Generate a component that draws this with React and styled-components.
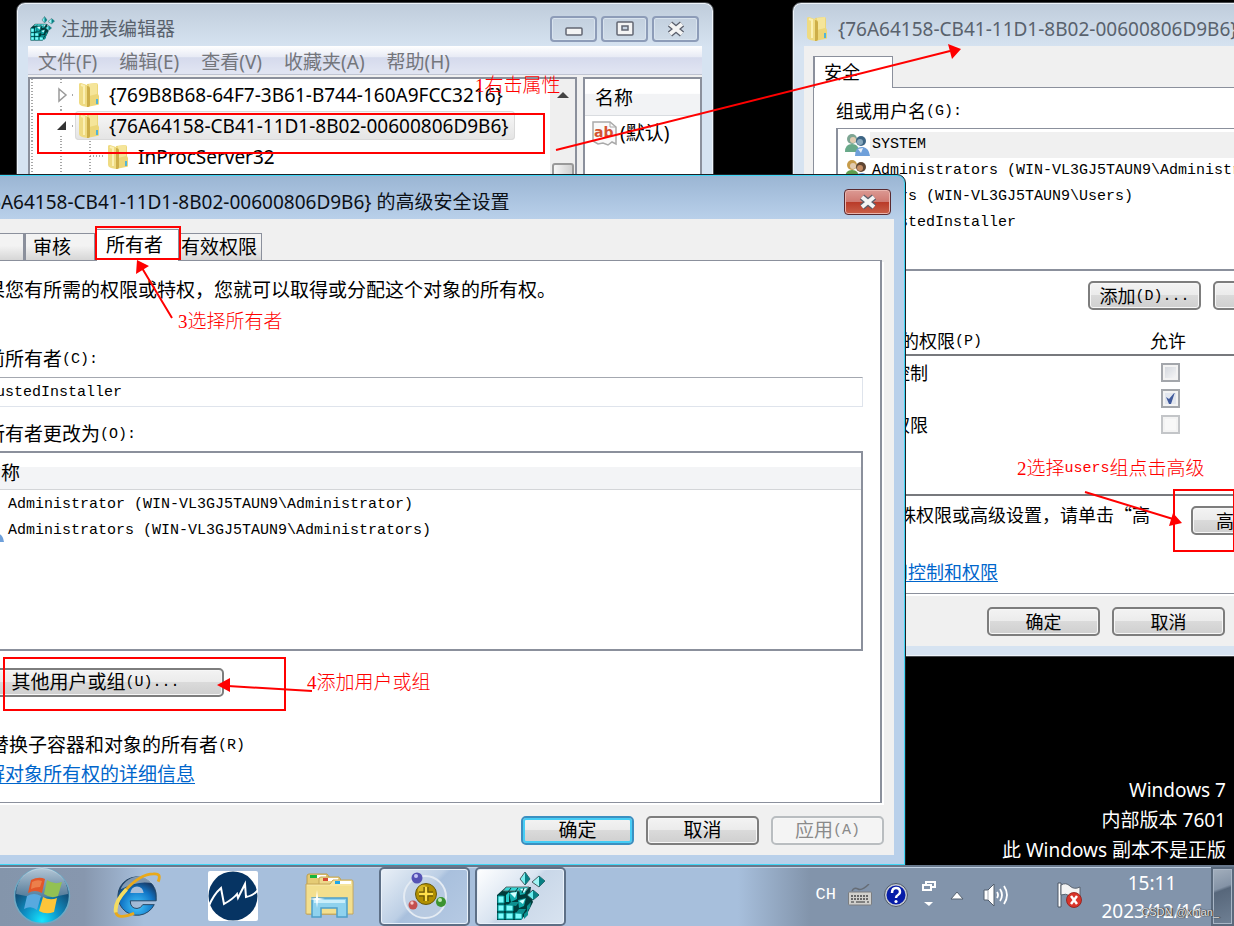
import styled, { createGlobalStyle, css } from 'styled-components'

const UiFont = '"Noto Sans", "Noto Sans CJK SC", sans-serif'
const SongFont = '"Noto Sans CJK SC", sans-serif'
const MonoFont = '"Liberation Mono", "Noto Sans CJK SC", monospace'
const Line = '#8b909c'
const Face = '#f0f0f0'
const Red = '#ff0000'
const LinkBlue = '#0066cc'

const GlobalStyle = createGlobalStyle`
  * {
    box-sizing: border-box;
  }
  body {
    margin: 0;
    background: #000;
    font-family: ${SongFont};
    font-size: 19px;
    line-height: 28px;
    color: #000;
  }
  button, input {
    font: inherit;
    color: inherit;
  }
`

const Desktop = styled.div`
  min-height: 100vh;
  display: flex;
  flex-direction: column;
  position: relative;
  overflow: hidden;
  background: #000;
`

const Workspace = styled.main`
  flex: 1;
  position: relative;
`

const windowPlaces = {
  regedit: css`
    left: 16px;
    top: 2px;
    width: 698px;
    height: 240px;
  `,
  security: css`
    left: 792px;
    top: 2px;
    width: 580px;
    font-size: 18px;
  `,
  advanced: css`
    left: -72px;
    top: 174px;
    width: 978px;
  `,
}

const Window = styled.section`
  position: absolute;
  ${({ $place }) => windowPlaces[$place]}
  display: flex;
  flex-direction: column;
  border: 1px solid ${({ $active }) => ($active ? '#1d2126' : '#45484c')};
  border-radius: 9px 9px 0 0;
  box-shadow: inset 0 0 0 1px ${({ $active }) => ($active ? '#3fd6f5' : '#eef4fa')};
  padding: 1px 11px 10px 11px;
  background: ${({ $active }) => ($active
    ? 'linear-gradient(#9ab5d3, #b9d0ea 44px)'
    : 'linear-gradient(#bfccdb, #d6e3f1 44px)')};
`

const TitleBar = styled.header`
  height: ${({ $active }) => ($active ? '43px' : '42px')};
  flex: none;
  display: flex;
  align-items: center;
  padding-top: ${({ $active }) => ($active ? '8px' : '7px')};
  padding-left: ${({ $active }) => ($active ? '32px' : '2px')};
  svg {
    flex: none;
  }
`

const TitleText = styled.h1`
  flex: 1;
  margin: 0 0 0 ${({ $gap }) => $gap || '0'};
  font-family: ${UiFont};
  font-size: 19px;
  font-weight: 400;
  line-height: 28px;
  white-space: nowrap;
  color: ${({ $active }) => ($active ? '#0c1016' : '#59626d')};
`

const CaptionButtons = styled.div`
  display: flex;
  gap: 4px;
  padding-right: 3px;
`

const CaptionButton = styled.button`
  width: 47px;
  height: 26px;
  padding: 0;
  display: flex;
  align-items: center;
  justify-content: center;
  border: 2px solid #8d9cb8;
  border-radius: 4px;
  background: linear-gradient(#c3d0df, #cfdbe8);
  box-shadow: inset 0 0 0 1px #d8e3ee;
`

const CloseButton = styled(CaptionButton)`
  border: 1px solid #5a2a30;
  background: linear-gradient(#dc9a94 0%, #cf7a72 48%, #b93a28 50%, #c9604a 100%);
  box-shadow: inset 0 0 0 1px #eab5ae;
`

const MenuBar = styled.nav`
  height: 29px;
  flex: none;
  display: flex;
  align-items: center;
  gap: 22px;
  padding: 3px 0 0 10px;
  background: linear-gradient(#fff 0%, #e8ebf5 38%, #d5daec 42%, #e0e4f2 90%);
  border-bottom: 1px solid #bfc4d2;
`

const MenuItem = styled.button`
  padding: 0;
  border: 0;
  background: none;
  font-family: ${UiFont};
  color: #74767c;
  white-space: nowrap;
`

const Panes = styled.div`
  flex: 1;
  min-height: 0;
  display: flex;
  gap: 6px;
  padding-top: 2px;
  background: ${Face};
`

const TreePane = styled.div`
  flex: 1;
  display: flex;
  border: 2px solid ${Line};
  background: #fff;
`

const Tree = styled.ul`
  flex: 1;
  margin: 0;
  padding: 0;
  list-style: none;
`

const TreeRow = styled.li`
  height: 31px;
  display: flex;
  align-items: center;
  svg {
    flex: none;
  }
`

const TreeLabel = styled.span`
  height: 29px;
  display: flex;
  align-items: center;
  gap: 9px;
  padding: 0 6px 0 3px;
  font-family: ${UiFont};
  white-space: nowrap;
  border-radius: 4px;
  ${({ $selected }) => $selected && css`
    background: linear-gradient(#f8f8f8, #e4e4e4);
    box-shadow: inset 0 0 0 1px #dadada;
  `}
`

const ScrollBar = styled.div`
  width: 25px;
  display: flex;
  flex-direction: column;
  align-items: center;
  background: #efefef;
  padding-top: 12px;
`

const ScrollThumb = styled.div`
  width: 22px;
  height: 60px;
  margin-top: 64px;
  border: 2px solid #999;
  border-radius: 3px;
  background: linear-gradient(90deg, #f6f6f6, #cfcfcf);
`

const ValuePane = styled.div`
  width: 119px;
  border: 2px solid ${Line};
  background: #fff;
  font-family: ${UiFont};
`

const ValueHead = styled.div`
  height: 37px;
  padding: 5px 0 0 10px;
  background: linear-gradient(#fff 40%, #f2f3f5 42%);
  border-bottom: 1px solid #d9dce0;
`

const ValueRow = styled.div`
  display: flex;
  align-items: center;
  gap: 3px;
  padding: 3px 0 0 7px;
`

const Body = styled.div`
  flex: 1;
  display: flex;
  flex-direction: column;
  background: ${Face};
  padding: 10px 10px 10px 9px;
`

const Tabs = styled.div`
  height: 31px;
  display: flex;
  align-items: flex-end;
`

const Tab = styled.button`
  width: ${({ $width }) => $width};
  height: 27px;
  padding: 0 0 2px 7px;
  line-height: 24px;
  text-align: left;
  white-space: nowrap;
  border: 1px solid ${Line};
  border-bottom: 0;
  border-left-width: 2px;
  background: linear-gradient(#f3f3f3 45%, #d6d6d6);
  ${({ $tight }) => $tight && 'padding-left: 0;'}
  ${({ $current }) => $current && css`
    height: 32px;
    margin-bottom: -1px;
    padding: 0 0 4px 9px;
    position: relative;
    background: #fff;
  `}
`

const Page = styled.div`
  margin-right: 2px;
  border: 1px solid ${Line};
  border-right-width: 2px;
  box-shadow: 2px 2px 0 #fff;
  background: #fff;
  padding: ${({ $security }) => ($security ? '8px 20px 8px 22px' : '14px 17px 15px 17px')};
`

const Text = styled.p`
  margin: 0;
  white-space: nowrap;
`

const Label = styled.label`
  display: block;
  white-space: nowrap;
`

// access keys and account names are set in the fixed width face
const Key = styled.span`
  font-family: ${MonoFont};
  font-size: 15px;
  line-height: 1;
  vertical-align: 3px;
`

const OwnerField = styled(Label)`
  margin-top: 41px;
`

const OwnerInput = styled.input`
  display: block;
  width: 100%;
  height: 30px;
  margin: 5px 0 12px 0;
  padding: 0 0 0 10px;
  font-family: ${MonoFont};
  font-size: 15px;
  border: 1px solid #dfe4ec;
  border-top-color: #a4a8b0;
  background: #fff;
`

const OwnerList = styled.div`
  height: 200px;
  margin: 4px 0 16px 0;
  border: 2px solid ${Line};
  background: #fff;
`

const OwnerHead = styled.div`
  height: 37px;
  margin-bottom: 2px;
  padding: 5px 0 0 13px;
  background: linear-gradient(#fff 38%, #f3f4f6 40%);
  border-bottom: 1px solid #d3d5d8;
`

const AccountRow = styled.div`
  height: 26px;
  display: flex;
  align-items: center;
  gap: ${({ $owner }) => ($owner ? '2px' : '0')};
  padding-left: ${({ $owner }) => ($owner ? '10px' : '7px')};
  font-family: ${MonoFont};
  font-size: 15px;
  line-height: 26px;
  white-space: nowrap;
  svg {
    flex: none;
  }
  span {
    flex: 1;
    padding-left: 2px;
    background: ${({ $selected }) => ($selected ? Face : 'transparent')};
  }
`

const PushButton = styled.button`
  width: ${({ $width }) => $width || '113px'};
  height: 29px;
  flex: none;
  padding: 0 0 2px 0;
  line-height: 22px;
  text-align: center;
  white-space: nowrap;
  border: 2px solid #7d7d7d;
  border-radius: 5px;
  background: linear-gradient(#f3f3f3 0%, #ebebeb 48%, #dadada 50%, #cfcfcf 100%);
  box-shadow: inset 0 0 0 1px #f7f7f7;
  ${({ $default }) => $default && css`
    border-color: #3c8fc0;
    box-shadow: inset 0 0 0 2px #45cdf5;
  `}
  &:disabled {
    color: #8a8a8a;
    border-color: #b9bdc0;
    background: #f4f4f4;
  }
`

const Footer = styled.footer`
  display: flex;
  justify-content: flex-end;
  gap: 12px;
  padding-top: 13px;
`

const CheckLine = styled(Label)`
  display: flex;
  align-items: center;
  gap: 4px;
  margin-top: 33px;
  margin-bottom: 1px;
`

const CheckBox = styled.input`
  appearance: none;
  display: block;
  width: 19px;
  height: 19px;
  margin: 0;
  border: 2px solid #a3a6ab;
  background: linear-gradient(135deg, #cfd3da, #fafafa);
  box-shadow: inset 0 0 0 2px #f3f3f3;
  &:disabled {
    border-color: #c3c5c8;
    background: #f8f8f8;
  }
  &:checked {
    background: url("data:image/svg+xml,%3Csvg xmlns='http://www.w3.org/2000/svg' viewBox='0 0 15 15'%3E%3Cpath d='M3 6l3 2 6-7-4 12H6z' fill='%23405a9c'/%3E%3C/svg%3E") #e2e6ee;
  }
`

const Link = styled.a`
  display: block;
  width: max-content;
  color: ${LinkBlue};
  text-decoration: underline;
  text-underline-offset: 2px;
  white-space: nowrap;
`

const GroupList = styled.div`
  height: 143px;
  margin: 4px 0 10px 0;
  padding-top: 3px;
  border: 2px solid ${Line};
  border-top-width: 1px;
`

const ButtonRow = styled.div`
  display: flex;
  justify-content: flex-end;
  gap: 12px;
`

const Permissions = styled.table`
  width: 100%;
  margin-top: 16px;
  border-collapse: collapse;
  border-bottom: 2px solid #77797d;
  th {
    height: 28px;
    padding: 0 0 0 2px;
    font-weight: 400;
    text-align: left;
    border-bottom: 2px solid #77797d;
  }
  td {
    height: 26px;
    padding: 0 0 0 20px;
    line-height: 26px;
  }
  th + th, td + td {
    width: 198px;
    padding: 0 0 0 22px;
  }
  td + td {
    padding-left: 33px;
  }
  tbody::before {
    content: "";
    display: block;
    height: 3px;
  }
  tbody::after {
    content: "";
    display: block;
    height: 57px;
  }
`

const AdvancedRow = styled.div`
  display: flex;
  justify-content: space-between;
  align-items: flex-end;
  margin: 4px 22px 22px 8px;
  height: 35px;
  ${Text} {
    align-self: flex-start;
  }
`

const BuildInfo = styled.p`
  position: absolute;
  right: 8px;
  bottom: 0;
  margin: 0;
  font-family: ${UiFont};
  line-height: 30px;
  text-align: right;
  color: #fff;
`

const TaskBar = styled.footer`
  position: relative;
  height: 61px;
  flex: none;
  display: flex;
  align-items: center;
  border-top: 2px solid #68788c;
  box-shadow: inset 0 1px 0 #c4d3e6;
  background: linear-gradient(90deg, #8495ab 0, #8797ae 84px, #a7bfdc 144px, #a7bfdc 738px, #8294ab 810px);
`

const Launchers = styled.div`
  flex: 1;
  display: flex;
  align-items: center;
  gap: 5px;
`

const Launcher = styled.button`
  width: 91px;
  height: 59px;
  padding: 0 0 2px 0;
  display: flex;
  align-items: center;
  justify-content: center;
  border: 0;
  background: none;
  ${({ $open }) => $open && css`
    border: 2px solid #5d6f86;
    border-radius: 5px;
    box-shadow: inset 0 0 0 1px #e9f1fa;
    background: ${$open === 'front'
      ? 'linear-gradient(135deg, #fff, #d9e4f1 45%, #c9d7e8 50%, #d8e3f0)'
      : 'linear-gradient(135deg, #eaf0f7, #bccfe5 45%, #a9c0dd 50%, #b6cae3)'};
  `}
`

const StartButton = styled(Launcher)`
  width: 83px;
  margin-right: 3px;
`

const Tray = styled.div`
  display: flex;
  align-items: center;
  color: #fff;
`

const TrayGroup = styled.div`
  display: flex;
  align-items: center;
  gap: ${({ $gap }) => $gap};
  margin-right: ${({ $after }) => $after};
  padding-bottom: 4px;
`

const Language = styled.span`
  font-family: ${MonoFont};
  font-size: 17px;
`

const Clock = styled.time`
  width: 104px;
  margin-right: 7px;
  font-family: ${UiFont};
  text-align: center;
  color: #fff;
`

const ShowDesktop = styled.button`
  width: 23px;
  height: 59px;
  padding: 0;
  border: 2px solid #59697c;
  box-shadow: inset 0 0 0 1px #a9b6c6;
  background: linear-gradient(160deg, #a3afbd 0%, #8493a6 35%, #57677b 40%, #6f8094 100%);
`

const Watermark = styled.span`
  position: absolute;
  right: 15px;
  bottom: 5px;
  font-family: "Liberation Sans", sans-serif;
  font-size: 11px;
  line-height: 18px;
  color: #e4e4e4;
  text-shadow: 0 0 1px #222, 1px 0 1px #333;
`

const Marks = styled.svg`
  position: absolute;
  left: 0;
  top: 0;
  pointer-events: none;
`

const Note = styled.span`
  position: absolute;
  left: ${({ $x }) => $x};
  top: ${({ $y }) => $y};
  font-family: "Liberation Serif", "Noto Sans CJK SC", serif;
  font-weight: 300;
  color: ${Red};
  white-space: nowrap;
`

const RegeditIcon = ({ size }) => (
  <svg width={size} height={size} viewBox="0 0 50 50">
    <path d="M1 24L10 16h25l-1 7 3 8-5 10-7 8H1z" fill="#003c3c" />
    <path d="M10 16h23l-3 4H7z" fill="#35d5d5" stroke="#5c6b6b" />
    <path d="M2 25h6v7H2zM2 34h6v6H2zM2 42h6v6H2zM10 34h7v6h-7zM10 42h7v6h-7zM19 42h7v6h-7z" fill="#7ffbfb" stroke="#009a9a" />
    <path d="M10 24l3-3v10h-3z" fill="#24caca" />
    <path d="M13 22l8-2v8l-6 3zM23 18l8-2-2 7-5 1zM22 29l8-2-2 8-5 2z" fill="#12aaaa" />
    <path d="M14 22l7-1-2 6zM24 18l7-1-3 5zM23 30l6-2-2 5z" fill="#d4ffff" />
    <path d="M12 34l3-3h8l-3 4M20 42l3-4h7l-3 5M28 43l4-4v5l-4 4zM31 35l4-4-1 6-3 3z" fill="#0d8f8f" />
    <path d="M8 20v5M15 17l-3 4M22 17l-3 4M28 17l-2 5" stroke="#003c3c" />
    <path d="M29 1l5 7-5 6-5-6z" fill="#7deff0" stroke="#4b5c60" />
    <path d="M29 1l5 7-5 6z" fill="#087f83" />
    <path d="M36 11l7-6 6 5-6 6z" fill="#9ff4f4" stroke="#4b5c60" />
    <path d="M43 5l6 5-6 6z" fill="#087f83" />
    <path d="M31 24l6-5 6 5-6 5z" fill="#68eaec" stroke="#28484c" />
    <path d="M37 19l6 5-6 5z" fill="#087f83" />
  </svg>
)

const FolderIcon = () => (
  <svg width="22" height="26" viewBox="0 0 22 26">
    <path d="M9 2l9-1q2 0 2 2v9l1 2v8q0 1-2 1l-10 2z" fill="#ecd678" />
    <path d="M11 2l8-1v11l-8 2z" fill="#f5e59a" />
    <path d="M1 2q0-1 2-1l6 2q3 1 3 3v17q0 2-3 2l-5-1q-3-1-3-3z" fill="#efdb83" />
    <path d="M9 4q3 0 3 3v16q0 2-3 2z" fill="#cdae48" />
    <path d="M3 3l3 1v18" fill="none" stroke="#fbf0b4" strokeWidth="2" />
    <path d="M18 17h2v5h-2z" fill="#52b4d8" />
  </svg>
)

const UsersIcon = ({ warm }) => (
  <svg width="25" height="24" viewBox="0 0 25 24">
    <path d="M0 19q0-8 7-8t7 8z" fill={warm ? '#5f9d4d' : '#68a989'} />
    <circle cx="7" cy="6" r="5" fill={warm ? '#c69b4a' : '#7ea593'} />
    <circle cx="8" cy="7" r="3" fill="#e2cbb0" />
    <path d="M10 23q0-10 8-9 6 1 7 9z" fill="#6fa0da" />
    <circle cx="16" cy="8" r="5" fill={warm ? '#5f4632' : '#3d6584'} />
    <circle cx="15" cy="9" r="3" fill={warm ? '#c58d64' : '#87a8bd'} />
    <path d="M13 16l3 4 2-5" fill="#e8f0f8" />
  </svg>
)

const UserIcon = () => (
  <svg width="25" height="24" viewBox="0 0 25 24">
    <path d="M3 22q0-9 8-9t8 9z" fill="#6fa0da" />
    <circle cx="11" cy="7" r="5" fill="#c69b4a" />
  </svg>
)

const StringIcon = () => (
  <svg width="25" height="25" viewBox="0 0 25 25">
    <path d="M1 1h17l6 5v17l-4-2-4 3-5-2-5 1-5-3z" fill="#f9f9f9" stroke="#a9a9a9" strokeWidth="1.5" />
    <path d="M18 1v5h6" fill="none" stroke="#a9a9a9" />
    <text x="2" y="16" fontFamily="DejaVu Sans" fontWeight="700" fontSize="14" fill="#d45432">ab</text>
  </svg>
)

const Cross = () => (
  <svg width="20" height="16" viewBox="0 0 20 16">
    <path d="M4 3l12 10M16 3L4 13" stroke="#5a5f6c" strokeWidth="6.5" />
    <path d="M4 3l12 10M16 3L4 13" stroke="#f4f4f4" strokeWidth="4" />
  </svg>
)

const Minimize = () => (
  <svg width="18" height="16" viewBox="0 0 18 16">
    <rect x="1" y="7" width="16" height="7" rx="1" fill="#f4f4f4" stroke="#626672" strokeWidth="1.5" />
  </svg>
)

const Maximize = () => (
  <svg width="18" height="15" viewBox="0 0 18 15">
    <rect x="1" y="1" width="16" height="13" rx="1" fill="#f4f4f4" stroke="#626672" strokeWidth="1.5" />
    <rect x="6" y="5" width="6" height="4" fill="#c9d5e3" stroke="#626672" strokeWidth="1.5" />
  </svg>
)

const Branch = ({ kind }) => (
  <svg width={kind === 'child' ? 74 : 45} height="31" viewBox={`0 0 ${kind === 'child' ? 74 : 45} 31`}>
    <g stroke="#8a8a8a" strokeWidth="1.5" strokeDasharray="1 2">
      <path d="M2 0v31" />
      {kind === 'closed' && <path d="M31 0v4M31 27v4M42 16h5" />}
      {kind === 'open' && <path d="M31 0v5M31 26v5M42 16h5" />}
      {kind === 'child' && <path d="M31 0v31M60 0v31M60 15h16" />}
    </g>
    {kind === 'closed' && <path d="M29 10l7 6-7 6z" fill="#fff" stroke="#9a9a9a" strokeWidth="1.5" />}
    {kind === 'open' && <path d="M36 11v9H27z" fill="#333" />}
  </svg>
)

const StartOrb = () => (
  <svg width="58" height="58" viewBox="0 0 58 58">
    <defs>
      <radialGradient id="orb" cx="50%" cy="95%" r="80%">
        <stop offset="0" stopColor="#16e6ff" />
        <stop offset="0.4" stopColor="#0e93c8" />
        <stop offset="0.85" stopColor="#124a72" />
      </radialGradient>
      <linearGradient id="orbShine" x1="0" y1="0" x2="0" y2="1">
        <stop offset="0" stopColor="#d0dde8" />
        <stop offset="1" stopColor="#5c7f9c" />
      </linearGradient>
    </defs>
    <circle cx="29" cy="29" r="27.5" fill="url(#orb)" stroke="#6fa9c4" strokeWidth="1.5" />
    <path d="M3 27a26 26 0 0 1 52 0q-26 7-52 0z" fill="url(#orbShine)" opacity="0.85" />
    <path d="M18 13q8-4 14-1l-3 14q-7-4-14 0z" fill="#e2572a" />
    <path d="M34 13q7 5 15 2l-4 14q-7 3-14-2z" fill="#93c153" />
    <path d="M14 29q7-4 14 0l-4 14q-6-5-13-1z" fill="#58a9df" />
    <path d="M30 30q7 4 14 1l-3 14q-8 3-15-1z" fill="#fdc53a" />
    <path d="M19 15q5-3 10-1l-2 6q-5 0-9 2z" fill="#f39a62" opacity="0.6" />
  </svg>
)

const ExplorerE = () => (
  <svg width="50" height="48" viewBox="0 0 52 50">
    <defs>
      <radialGradient id="ie" cx="50%" cy="75%" r="65%">
        <stop offset="0" stopColor="#45c9ff" />
        <stop offset="0.65" stopColor="#1175c6" />
        <stop offset="1" stopColor="#183c69" />
      </radialGradient>
    </defs>
    <path d="M46 27A20 20 0 1 0 44 34H32q-2 4-6 4-7 0-7-8h27z" fill="url(#ie)" stroke="#244562" />
    <path d="M19 22q1-7 7-7t7 7z" fill="#a9bfdb" />
    <path d="M9 18a20 20 0 0 1 34-6q-15-4-34 6z" fill="#b8c7d5" opacity="0.65" />
    <path d="M48 10q4-9-5-8Q30 2 15 18 2 32 4 42q2 8 19 1" fill="none" stroke="#e9a91b" strokeWidth="3" />
    <path d="M15 18Q2 32 4 42" fill="none" stroke="#f4dc62" strokeWidth="4" />
  </svg>
)

const WaveLogo = () => (
  <svg width="50" height="50" viewBox="0 0 50 50">
    <rect width="50" height="50" rx="2" fill="#fff" />
    <circle cx="25" cy="25" r="24.5" fill="#063463" />
    <path d="M0 37Q5 24 13 17L16 33Q25 28 29 23L30 27 37 13 38 26Q45 25 50 19" fill="none" stroke="#fff" strokeWidth="2" />
  </svg>
)

const LibraryIcon = () => (
  <svg width="50" height="48" viewBox="0 0 50 48">
    <path d="M3 4q0-2 2-2h18l3 4h10v36H3z" fill="#e5cb75" stroke="#bd9d4e" />
    <path d="M6 3h7v3H6z" fill="#16b53b" />
    <path d="M13 3h9v3h-9z" fill="#fff" />
    <path d="M15 7q0-2 2-2h18l3 5v32H15z" fill="#eed98b" stroke="#c5a659" />
    <path d="M19 6h5v3h-5z" fill="#d64a34" />
    <path d="M24 6h10v3H24z" fill="#fff" />
    <path d="M2 12h24l3-4h19q1 0 1 2v32H2z" fill="#f6e59e" stroke="#c5a659" />
    <path d="M31 9h5v3h-5z" fill="#1ca6e8" />
    <path d="M36 9h11v3H36z" fill="#fff" />
    <path d="M3 14h45v27H3z" fill="#f3df8e" />
    <path d="M8 26h35v19H33V36H17v9H8z" fill="#8fd2ee" stroke="#4e9fc9" strokeWidth="1.5" />
    <path d="M10 28h31v3H10z" fill="#c9eefb" />
    <path d="M13 18l1 8 7 1-7 1-1 8-1-8-7-1 7-1z" fill="#fff" />
  </svg>
)

const GearOrbit = () => (
  <svg width="48" height="48" viewBox="0 0 48 48">
    <circle cx="24" cy="25" r="21" fill="#c4d1e3" fillOpacity="0.5" stroke="#e4ebf3" strokeWidth="2" />
    <circle cx="25" cy="22" r="10.5" fill="#b18f00" stroke="#66580d" />
    <circle cx="22" cy="18" r="5" fill="#e5c838" opacity="0.7" />
    <path d="M25 15v14M18 22h14" stroke="#5f4d00" strokeWidth="5" />
    <path d="M25 15v14M18 22h14" stroke="#ffe04a" strokeWidth="2.5" />
    <circle cx="16" cy="6" r="5.5" fill="#5552b4" />
    <circle cx="15" cy="4" r="2" fill="#c6c6f5" />
    <circle cx="12" cy="33" r="4.5" fill="#c4504e" />
    <circle cx="11" cy="31" r="1.7" fill="#f8c9c8" />
    <circle cx="40" cy="30" r="5" fill="#3b9330" />
    <circle cx="39" cy="28" r="2" fill="#c0e8b6" />
  </svg>
)

const KeyboardIcon = () => (
  <svg width="24" height="22" viewBox="0 0 24 22">
    <path d="M4 7q2-4 6-2t11-5" fill="none" stroke="#666d76" strokeWidth="1.5" />
    <rect x="0.5" y="8" width="23" height="13" rx="1" fill="#d1d0cc" stroke="#7b7d80" />
    <path d="M3 12h18M3 15h18" stroke="#676767" strokeWidth="2" strokeDasharray="2 1" />
    <path d="M3 18h3M8 18h9M19 18h2" stroke="#676767" strokeWidth="1.5" />
  </svg>
)

const HelpIcon = () => (
  <svg width="24" height="26" viewBox="0 0 24 26">
    <circle cx="12" cy="13" r="10.5" fill="#061ca8" stroke="#c2c7cf" strokeWidth="2" />
    <circle cx="12" cy="13" r="11.5" fill="none" stroke="#4d5968" strokeWidth="1" />
    <path d="M8 11q0-5 4-5t4 4q0 2-2 3t-2 3" fill="none" stroke="#fff" strokeWidth="2.5" />
    <circle cx="12" cy="19.5" r="1.6" fill="#fff" />
  </svg>
)

const RestoreIcon = () => (
  <svg width="14" height="28" viewBox="0 0 14 28">
    <path d="M4 3V1h9v5H9" fill="none" stroke="#fff" strokeWidth="2" />
    <path d="M1 4h8v5H1z" fill="none" stroke="#fff" strokeWidth="2" />
    <path d="M2 21h9l-4 4z" fill="#fff" />
  </svg>
)

const SpeakerIcon = () => (
  <svg width="26" height="26" viewBox="0 0 26 26">
    <path d="M1 8h4l6-6v22l-6-6H1z" fill="#fff" stroke="#535e6c" />
    <path d="M5 8v10" stroke="#a6abb3" />
    <path d="M14 10q2 3 0 6M17 7q4 6 0 12M21 4q6 9 0 18" fill="none" stroke="#fff" strokeWidth="1.8" />
  </svg>
)

const FlagIcon = () => (
  <svg width="26" height="26" viewBox="0 0 26 26">
    <path d="M1 1h3v24H1z" fill="#fff" stroke="#4d5764" />
    <path d="M4 3q5-3 9 1 4 4 10 1v9q-6 3-10 0-4-3-9-1z" fill="#f4f4f4" stroke="#59636f" />
    <circle cx="17" cy="18" r="7.5" fill="#d9342a" stroke="#8e1b15" strokeWidth="0.8" />
    <path d="M14 14l6 8M20 14l-6 8" stroke="#fff" strokeWidth="2.5" />
  </svg>
)

const menus = ['文件(F)', '编辑(E)', '查看(V)', '收藏夹(A)', '帮助(H)']
const owners = [
  'Administrator (WIN-VL3GJ5TAUN9\\Administrator)',
  'Administrators (WIN-VL3GJ5TAUN9\\Administrators)',
]
const groups = [
  'SYSTEM',
  'Administrators (WIN-VL3GJ5TAUN9\\Administrators)',
  'Users (WIN-VL3GJ5TAUN9\\Users)',
  'TrustedInstaller',
]
const permissions = [
  { name: '完全控制' },
  { name: '读取', checked: true },
  { name: '特殊权限', disabled: true },
]

const Regedit = () => (
  <Window $place="regedit">
    <TitleBar>
      <RegeditIcon size={25} />
      <TitleText $gap="6px">注册表编辑器</TitleText>
      <CaptionButtons>
        <CaptionButton aria-label="最小化"><Minimize /></CaptionButton>
        <CaptionButton aria-label="最大化"><Maximize /></CaptionButton>
        <CaptionButton aria-label="关闭"><Cross /></CaptionButton>
      </CaptionButtons>
    </TitleBar>
    <MenuBar>
      {menus.map(menu => <MenuItem key={menu}>{menu}</MenuItem>)}
    </MenuBar>
    <Panes>
      <TreePane>
        <Tree>
          <TreeRow>
            <Branch kind="closed" />
            <TreeLabel><FolderIcon />{'{769B8B68-64F7-3B61-B744-160A9FCC3216}'}</TreeLabel>
          </TreeRow>
          <TreeRow>
            <Branch kind="open" />
            <TreeLabel $selected><FolderIcon />{'{76A64158-CB41-11D1-8B02-00600806D9B6}'}</TreeLabel>
          </TreeRow>
          <TreeRow>
            <Branch kind="child" />
            <TreeLabel><FolderIcon />InProcServer32</TreeLabel>
          </TreeRow>
        </Tree>
        <ScrollBar>
          <svg width="12" height="8" viewBox="0 0 12 8"><path d="M0 7l6-6 6 6z" fill="#444" /></svg>
          <ScrollThumb />
        </ScrollBar>
      </TreePane>
      <ValuePane>
        <ValueHead>名称</ValueHead>
        <ValueRow><StringIcon />(默认)</ValueRow>
      </ValuePane>
    </Panes>
  </Window>
)

const Security = () => (
  <Window $place="security">
    <TitleBar>
      <FolderIcon />
      <TitleText $gap="10px">{'{76A64158-CB41-11D1-8B02-00600806D9B6}'}</TitleText>
    </TitleBar>
    <Body>
      <Tabs><Tab $width="80px" $current>安全</Tab></Tabs>
      <Page $security>
        <Text>组或用户名<Key>(G):</Key></Text>
        <GroupList>
          {groups.map((group, index) => (
            <AccountRow key={group} $selected={index === 0}>
              <UsersIcon warm={index > 0} /><span>{group}</span>
            </AccountRow>
          ))}
        </GroupList>
        <ButtonRow>
          <PushButton>添加<Key>(D)...</Key></PushButton>
          <PushButton>删除<Key>(R)</Key></PushButton>
        </ButtonRow>
        <Permissions>
          <thead>
            <tr>
              <th><Key>SYSTEM </Key>的权限<Key>(P)</Key></th>
              <th>允许</th>
            </tr>
          </thead>
          <tbody>
            {permissions.map(({ name, checked, disabled }) => (
              <tr key={name}>
                <td>{name}</td>
                <td><CheckBox type="checkbox" aria-label={name} defaultChecked={checked} disabled={disabled} /></td>
              </tr>
            ))}
          </tbody>
        </Permissions>
        <AdvancedRow>
          <Text>有关特殊权限或高级设置，请单击“高</Text>
          <PushButton>高级<Key>(V)</Key></PushButton>
        </AdvancedRow>
        <Link href="#access">了解访问控制和权限</Link>
      </Page>
      <Footer>
        <PushButton>确定</PushButton>
        <PushButton>取消</PushButton>
        <PushButton disabled>应用<Key>(A)</Key></PushButton>
      </Footer>
    </Body>
  </Window>
)

const AdvancedSecurity = () => (
  <Window $place="advanced" $active>
    <TitleBar $active>
      <TitleText $active>{'{76A64158-CB41-11D1-8B02-00600806D9B6} 的高级安全设置'}</TitleText>
      <CaptionButtons>
        <CloseButton aria-label="关闭"><Cross /></CloseButton>
      </CaptionButtons>
    </TitleBar>
    <Body>
      <Tabs>
        <Tab $width="75px">权限</Tab>
        <Tab $width="71px">审核</Tab>
        <Tab $width="84px" $current>所有者</Tab>
        <Tab $width="83px" $tight>有效权限</Tab>
      </Tabs>
      <Page>
        <Text>如果您有所需的权限或特权，您就可以取得或分配这个对象的所有权。</Text>
        <OwnerField htmlFor="owner">当前所有者<Key>(C):</Key></OwnerField>
        <OwnerInput id="owner" defaultValue="TrustedInstaller" readOnly />
        <Text>将所有者更改为<Key>(O):</Key></Text>
        <OwnerList>
          <OwnerHead>名称</OwnerHead>
          <AccountRow $owner><UserIcon /><span>{owners[0]}</span></AccountRow>
          <AccountRow $owner><UsersIcon warm /><span>{owners[1]}</span></AccountRow>
        </OwnerList>
        <PushButton $width="257px">其他用户或组<Key>(U)...</Key></PushButton>
        <CheckLine>
          <CheckBox type="checkbox" />
          <span>替换子容器和对象的所有者<Key>(R)</Key></span>
        </CheckLine>
        <Link href="#owner">了解对象所有权的详细信息</Link>
      </Page>
      <Footer>
        <PushButton $default>确定</PushButton>
        <PushButton>取消</PushButton>
        <PushButton disabled>应用<Key>(A)</Key></PushButton>
      </Footer>
    </Body>
  </Window>
)

const App = () => (
  <>
    <GlobalStyle />
    <Desktop>
      <Workspace>
        <BuildInfo>Windows 7<br />内部版本 7601<br />此 Windows 副本不是正版</BuildInfo>
        <Regedit />
        <Security />
        <AdvancedSecurity />
      </Workspace>
      <TaskBar>
        <Launchers>
          <StartButton aria-label="开始"><StartOrb /></StartButton>
          <Launcher aria-label="Internet Explorer"><ExplorerE /></Launcher>
          <Launcher aria-label="监控"><WaveLogo /></Launcher>
          <Launcher aria-label="资源管理器"><LibraryIcon /></Launcher>
          <Launcher aria-label="系统工具" $open="back"><GearOrbit /></Launcher>
          <Launcher aria-label="注册表编辑器" $open="front"><RegeditIcon size={50} /></Launcher>
        </Launchers>
        <Tray>
          <TrayGroup $gap="12px" $after="14px">
            <Language>CH</Language>
            <KeyboardIcon />
            <HelpIcon />
          </TrayGroup>
          <TrayGroup $gap="14px" $after="19px">
            <RestoreIcon />
            <svg width="14" height="10" viewBox="0 0 14 10"><path d="M1 9l6-7 6 7z" fill="#fff" stroke="#566270" /></svg>
          </TrayGroup>
          <TrayGroup $gap="48px" $after="17px">
            <SpeakerIcon />
            <FlagIcon />
          </TrayGroup>
          <Clock>15:11<br />2023/12/16</Clock>
          <ShowDesktop aria-label="显示桌面" />
        </Tray>
        <Watermark>CSDN @xnian_</Watermark>
      </TaskBar>
      <Marks width="1234" height="926" viewBox="0 0 1234 926">
        <g fill="none" stroke={Red} strokeWidth="2">
          <rect x="38" y="114" width="506" height="39" />
          <rect x="96" y="227" width="84" height="32" />
          <rect x="4" y="658" width="281" height="52" />
          <rect x="1174" y="490" width="60" height="61" />
          <path d="M556 150L950 51M172 318l-30-50M312 691l-84-5M1085 492l88 27" />
        </g>
        <path d="M961 49l-13-5 4 15zM137 260l-1 14 13-8zM217 685l13-7v14zM1182 523l-9-10-4 13z" fill={Red} />
      </Marks>
      <Note $x="475px" $y="72px">1右击属性</Note>
      <Note $x="1017px" $y="455px">2选择<Key>users</Key>组点击高级</Note>
      <Note $x="178px" $y="308px">3选择所有者</Note>
      <Note $x="307px" $y="669px">4添加用户或组</Note>
    </Desktop>
  </>
)

export default App
